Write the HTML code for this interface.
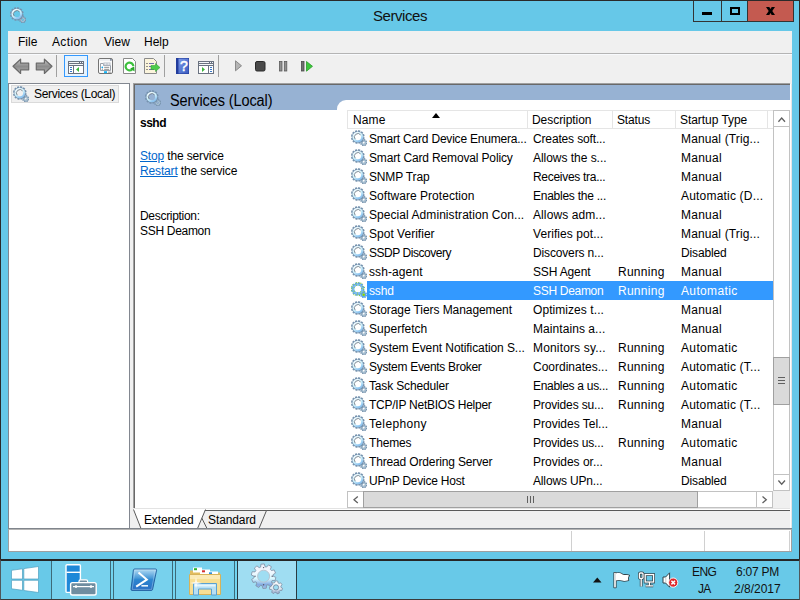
<!DOCTYPE html>
<html><head><meta charset="utf-8">
<style>
*{margin:0;padding:0;box-sizing:border-box}
html,body{width:800px;height:600px;overflow:hidden;background:#66c8e8;font-family:"Liberation Sans",sans-serif;font-size:12px;color:#000}
.a{position:absolute}
svg{position:absolute;overflow:visible}
#frame{left:0;top:0;width:800px;height:560px;background:#66c8e8;border:1px solid #2a2a2a}
#title{left:0;top:7px;width:800px;text-align:center;font-size:15px;color:#111;letter-spacing:-0.45px}
.tb{top:1px;height:21px;border:1px solid #333;border-top:none}
#client{left:8px;top:31px;width:784px;height:521px;background:#f0f0f0}
#menubar span{position:absolute;top:4px}
.tsep{top:55px;width:1px;height:22px;background:#a0a0a0}
#left{left:8px;top:83px;width:122px;height:446px;background:#fff;border:1px solid #828790}
#right{left:133px;top:83px;width:657px;height:425px;background:#f0f0f0;border-top:1px solid #a0a0a0;border-left:1px solid #a0a0a0}
#right2{left:134px;top:84px;width:656px;height:424px;border-top:1px solid #696969;border-left:1px solid #696969}
#hdr{left:135px;top:85px;width:655px;height:25px;background:#97b2d3}
#white{left:135px;top:110px;width:655px;height:398px;background:#fff}
#tabw{left:337px;top:100px;width:453px;height:12px;background:#fff;border-top-left-radius:9px}
.row{position:absolute;left:347px;width:426px;height:19px;letter-spacing:-0.15px}
.row span{position:absolute;top:3px;white-space:nowrap}
.c1{left:22px}.c2{left:186px}.c3{left:271px}.c4{left:334px}
.sel::before{content:"";position:absolute;left:20px;top:0;width:406px;height:19px;background:#3399ff}
.sel span{color:#fff}
.gear{left:4px;top:1px;width:16px;height:16px}
#lh{left:347px;top:110px;width:426px;height:19px;background:#fff;border-top:1px solid #e5e5e5;border-bottom:1px solid #e5e5e5;border-left:1px solid #e5e5e5}
.hs{position:absolute;top:0;width:1px;height:17px;background:#e5e5e5}
#lh span{position:absolute;top:2px;letter-spacing:-0.15px}
.sb{background:#fff;border:1px solid #c2c2c2}
.lk{color:#0066cc;text-decoration:underline}
.tk{top:560px;height:39px}
.tray{color:#111;font-size:12px;position:absolute;white-space:nowrap}
</style></head><body>
<svg width="0" height="0" style="position:absolute">
<defs><linearGradient id="gr" x1="0" y1="0" x2="0.6" y2="1"><stop offset="0" stop-color="#f4fcff"/><stop offset="0.6" stop-color="#cdf0fb"/><stop offset="1" stop-color="#8ec4f0"/></linearGradient>
<radialGradient id="gg" cx="0.5" cy="0.5" r="0.5"><stop offset="0.4" stop-color="#f2fbff"/><stop offset="0.62" stop-color="#c6eaf8"/><stop offset="0.8" stop-color="#98b8d2"/><stop offset="1" stop-color="#84a4c0"/></radialGradient>
<linearGradient id="tgg" x1="0" y1="0" x2="0" y2="1"><stop offset="0" stop-color="#e8ecf8"/><stop offset="0.3" stop-color="#f4f8ff"/><stop offset="0.6" stop-color="#d8f8ff"/><stop offset="0.85" stop-color="#80a8e0"/><stop offset="1" stop-color="#a8c0e8"/></linearGradient><linearGradient id="tgs" x1="0" y1="0" x2="0" y2="1"><stop offset="0" stop-color="#ffffff"/><stop offset="0.6" stop-color="#e0e8f0"/><stop offset="1" stop-color="#8aa0c8"/></linearGradient>
<linearGradient id="arr" x1="0" y1="0" x2="0" y2="1"><stop offset="0" stop-color="#c8c8c8"/><stop offset="0.5" stop-color="#8c8c8c"/><stop offset="1" stop-color="#b0b0b0"/></linearGradient>
<linearGradient id="ps" x1="0" y1="0" x2="1" y2="1"><stop offset="0" stop-color="#5aa8e0"/><stop offset="0.6" stop-color="#2a70b8"/><stop offset="1" stop-color="#1e5aa0"/></linearGradient>
<symbol id="g" viewBox="0 0 16 16"><path d="M15.40 12.70 L16.37 13.13 L15.96 14.46 L14.91 14.25 L14.61 14.61 L14.99 15.61 L13.76 16.24 L13.16 15.36 L12.70 15.40 L12.27 16.37 L10.94 15.96 L11.15 14.91 L10.79 14.61 L9.79 14.99 L9.16 13.76 L10.04 13.16 L10.00 12.70 L9.03 12.27 L9.44 10.94 L10.49 11.15 L10.79 10.79 L10.41 9.79 L11.64 9.16 L12.24 10.04 L12.70 10.00 L13.13 9.03 L14.46 9.44 L14.25 10.49 L14.61 10.79 L15.61 10.41 L16.24 11.64 L15.36 12.24ZM13.80 12.70 A1.10 1.10 0 1 0 11.60 12.70 A1.10 1.10 0 1 0 13.80 12.70Z" fill="#7a96b0" fill-rule="evenodd"/><circle cx="12.7" cy="12.7" r="1.8" fill="none" stroke="#b8d0e0" stroke-width="0.9"/><path d="M12.10 7.00 L13.68 7.54 L13.17 9.64 L11.52 9.41 L11.39 9.65 L12.49 10.91 L11.00 12.47 L9.69 11.44 L9.45 11.59 L9.77 13.23 L7.70 13.84 L7.08 12.29 L6.80 12.30 L6.26 13.88 L4.16 13.37 L4.39 11.72 L4.15 11.59 L2.89 12.69 L1.33 11.20 L2.36 9.89 L2.21 9.65 L0.57 9.97 L-0.04 7.90 L1.51 7.28 L1.50 7.00 L-0.08 6.46 L0.43 4.36 L2.08 4.59 L2.21 4.35 L1.11 3.09 L2.60 1.53 L3.91 2.56 L4.15 2.41 L3.83 0.77 L5.90 0.16 L6.52 1.71 L6.80 1.70 L7.34 0.12 L9.44 0.63 L9.21 2.28 L9.45 2.41 L10.71 1.31 L12.27 2.80 L11.24 4.11 L11.39 4.35 L13.03 4.03 L13.64 6.10 L12.09 6.72ZM10.80 7.00 A4.00 4.00 0 1 0 2.80 7.00 A4.00 4.00 0 1 0 10.80 7.00Z" fill="#7592ae" fill-rule="evenodd"/><circle cx="6.8" cy="7" r="4.3" fill="none" stroke="url(#gr)" stroke-width="2.1"/><path d="M4.2 9.2A3.3 3.3 0 0 1 9.6 4.9" fill="none" stroke="#5d6570" stroke-width="0.8" opacity="0.9"/></symbol>
<symbol id="gs" viewBox="0 0 16 16"><path d="M15.40 12.70 L16.37 13.13 L15.96 14.46 L14.91 14.25 L14.61 14.61 L14.99 15.61 L13.76 16.24 L13.16 15.36 L12.70 15.40 L12.27 16.37 L10.94 15.96 L11.15 14.91 L10.79 14.61 L9.79 14.99 L9.16 13.76 L10.04 13.16 L10.00 12.70 L9.03 12.27 L9.44 10.94 L10.49 11.15 L10.79 10.79 L10.41 9.79 L11.64 9.16 L12.24 10.04 L12.70 10.00 L13.13 9.03 L14.46 9.44 L14.25 10.49 L14.61 10.79 L15.61 10.41 L16.24 11.64 L15.36 12.24ZM13.80 12.70 A1.10 1.10 0 1 0 11.60 12.70 A1.10 1.10 0 1 0 13.80 12.70Z" fill="#5ea6ea" fill-rule="evenodd"/><path d="M12.10 7.00 L13.68 7.54 L13.17 9.64 L11.52 9.41 L11.39 9.65 L12.49 10.91 L11.00 12.47 L9.69 11.44 L9.45 11.59 L9.77 13.23 L7.70 13.84 L7.08 12.29 L6.80 12.30 L6.26 13.88 L4.16 13.37 L4.39 11.72 L4.15 11.59 L2.89 12.69 L1.33 11.20 L2.36 9.89 L2.21 9.65 L0.57 9.97 L-0.04 7.90 L1.51 7.28 L1.50 7.00 L-0.08 6.46 L0.43 4.36 L2.08 4.59 L2.21 4.35 L1.11 3.09 L2.60 1.53 L3.91 2.56 L4.15 2.41 L3.83 0.77 L5.90 0.16 L6.52 1.71 L6.80 1.70 L7.34 0.12 L9.44 0.63 L9.21 2.28 L9.45 2.41 L10.71 1.31 L12.27 2.80 L11.24 4.11 L11.39 4.35 L13.03 4.03 L13.64 6.10 L12.09 6.72ZM10.80 7.00 A4.00 4.00 0 1 0 2.80 7.00 A4.00 4.00 0 1 0 10.80 7.00Z" fill="#5ea6ea" fill-rule="evenodd"/><circle cx="6.8" cy="7" r="4.3" fill="none" stroke="#7dbcf4" stroke-width="2.1"/><circle cx="6.8" cy="7" r="3.1" fill="#fff"/><path d="M12.10 7.00 L13.68 7.54 L13.17 9.64 L11.52 9.41 L11.39 9.65 L12.49 10.91 L11.00 12.47 L9.69 11.44 L9.45 11.59 L9.77 13.23 L7.70 13.84 L7.08 12.29 L6.80 12.30 L6.26 13.88 L4.16 13.37 L4.39 11.72 L4.15 11.59 L2.89 12.69 L1.33 11.20 L2.36 9.89 L2.21 9.65 L0.57 9.97 L-0.04 7.90 L1.51 7.28 L1.50 7.00 L-0.08 6.46 L0.43 4.36 L2.08 4.59 L2.21 4.35 L1.11 3.09 L2.60 1.53 L3.91 2.56 L4.15 2.41 L3.83 0.77 L5.90 0.16 L6.52 1.71 L6.80 1.70 L7.34 0.12 L9.44 0.63 L9.21 2.28 L9.45 2.41 L10.71 1.31 L12.27 2.80 L11.24 4.11 L11.39 4.35 L13.03 4.03 L13.64 6.10 L12.09 6.72ZM10.80 7.00 A4.00 4.00 0 1 0 2.80 7.00 A4.00 4.00 0 1 0 10.80 7.00Z" fill="none" stroke="#88d000" stroke-width="1" stroke-dasharray="0.9 2.6"/><circle cx="12.7" cy="12.7" r="1.3" fill="#88d000"/></symbol>
</defs></svg>
<div id="frame" class="a"></div>
<svg style="left:10px;top:7px" width="16" height="16" viewBox="0 0 16 16"><use href="#g"/></svg>
<div id="title" class="a">Services</div>
<div class="a tb" style="left:693px;width:29px;background:#66c8e8"></div>
<div class="a tb" style="left:721px;width:27px;background:#66c8e8"></div>
<div class="a tb" style="left:747px;width:47px;background:#c45a50"></div>
<div class="a" style="left:702px;top:12px;width:10px;height:3px;background:#000"></div>
<div class="a" style="left:730px;top:7px;width:10px;height:8px;border:2px solid #000"></div>
<svg style="left:766px;top:7px" width="9" height="8"><path d="M0 0H3.3L4.5 2L5.7 0H9L6.3 4L9 8H5.7L4.5 6L3.3 8H0L2.7 4Z" fill="#000"/></svg>
<div id="client" class="a"></div>
<div id="menubar" class="a" style="left:0;top:31px">
<span style="left:18px">File</span><span style="left:52px;letter-spacing:0.35px">Action</span><span style="left:104px">View</span><span style="left:144px">Help</span>
</div>
<div class="a" style="left:8px;top:53px;width:784px;height:1px;background:#b4b4b4"></div><div class="a" style="left:8px;top:54px;width:784px;height:1px;background:#f8fafd"></div>
<!-- toolbar -->
<svg style="left:12px;top:58px" width="18" height="17"><path d="M1 8.3L8.6 1.2V5.2H16.7V11.8H8.6V15.5Z" fill="url(#arr)" stroke="#6a6a6a" stroke-width="1.2" stroke-linejoin="round"/></svg>
<svg style="left:35px;top:58px" width="18" height="17"><path d="M17 8.3L9.4 1.2V5.2H1.3V11.8H9.4V15.5Z" fill="url(#arr)" stroke="#6a6a6a" stroke-width="1.2" stroke-linejoin="round"/></svg>
<div class="a tsep" style="left:56px"></div>
<div class="a" style="left:64px;top:55px;width:24px;height:22px;background:#e5f3ff;border:1px solid #3399ff"></div>
<svg style="left:68px;top:61px" width="16" height="13"><rect x="0" y="0" width="16" height="13" fill="#6a7280"/><rect x="1" y="1" width="10" height="1" fill="#f4f6f8"/><rect x="12" y="1" width="1" height="1" fill="#f4f6f8"/><rect x="14" y="1" width="1" height="1" fill="#f4f6f8"/><rect x="1" y="3" width="14" height="1" fill="#f4f6f8"/><rect x="1" y="5" width="4" height="7" fill="#fff"/><rect x="6" y="5" width="9" height="7" fill="#fff"/><rect x="2" y="6" width="2" height="1" fill="#3a78c8"/><rect x="2" y="8" width="2" height="1" fill="#3a78c8"/><rect x="2" y="10" width="2" height="1" fill="#3a78c8"/><path d="M8 8.5L11 6V11Z" fill="#3cb53c"/></svg>
<svg style="left:98px;top:58px" width="15" height="16"><rect x="0.5" y="0.5" width="14" height="15" rx="1.5" fill="#fafafa" stroke="#747474"/><rect x="1.5" y="1.5" width="11" height="1" fill="#dfe4ea"/><rect x="12.2" y="1.2" width="1.4" height="1.4" fill="#4a5a7a"/><path d="M2.5 5.5H5.5V7.5H12.5V12.5H2.5Z" fill="#fff" stroke="#9aa0aa"/><rect x="5.5" y="4.5" width="7" height="3" fill="#b8bec8"/><rect x="6.5" y="5.5" width="2" height="1" fill="#fff"/><rect x="9.5" y="5.5" width="2" height="1" fill="#fff"/><circle cx="4.3" cy="9.3" r="0.9" fill="#10a8f0"/><circle cx="4.3" cy="11.2" r="0.6" fill="#888"/><rect x="6.2" y="8.8" width="5" height="1" fill="#8a8a8a"/><rect x="6.2" y="10.8" width="5" height="1" fill="#8a8a8a"/><rect x="6" y="13.2" width="3" height="2" fill="#18b4f4"/><rect x="10" y="13.5" width="3" height="1.5" fill="#bbb"/></svg>
<svg style="left:123px;top:58px" width="13" height="16"><path d="M0.5 0.5H9.5L12.5 3.5V15.5H0.5Z" fill="#fff" stroke="#8a8a8a"/><path d="M9.3 11.2A3.9 3.9 0 1 1 10.4 8.2" fill="none" stroke="#3cc03c" stroke-width="2.2"/><path d="M7.2 10.6L11.6 13.4L11.2 8.6Z" fill="#2aa82a"/></svg>
<svg style="left:144px;top:58px" width="17" height="16"><path d="M0.5 0.5H9.5L12.5 3.5V15.5H0.5Z" fill="#fbf4dc" stroke="#8a8a8a"/><rect x="2.5" y="5" width="1" height="1" fill="#333"/><rect x="5" y="5" width="5" height="1" fill="#7070b0"/><rect x="2.5" y="8" width="1" height="1" fill="#333"/><rect x="5" y="8" width="5" height="1" fill="#7070b0"/><rect x="2.5" y="11" width="1" height="1" fill="#333"/><rect x="5" y="11" width="5" height="1" fill="#7070b0"/><path d="M7 7.5H11.5V5.5L16 9.5L11.5 13.5V11.5H7Z" fill="#4ccc4c" stroke="#2a9a2a" stroke-width="0.5"/></svg>
<div class="a tsep" style="left:164px"></div>
<svg style="left:176px;top:58px" width="14" height="17"><defs><linearGradient id="hb" x1="0" y1="0" x2="1" y2="1"><stop offset="0" stop-color="#7a98e8"/><stop offset="1" stop-color="#3a5cc0"/></linearGradient></defs><rect x="0" y="0" width="13" height="16" fill="#223c9c"/><rect x="2.5" y="0.6" width="10" height="14.8" fill="url(#hb)"/><text x="7.8" y="13.2" font-family="Liberation Sans" font-size="14" fill="#fff" stroke="#fff" stroke-width="0.5" text-anchor="middle">?</text></svg>
<svg style="left:198px;top:61px" width="16" height="13"><rect x="0" y="0" width="16" height="13" fill="#6a7280"/><rect x="1" y="1" width="10" height="1" fill="#f4f6f8"/><rect x="12" y="1" width="1" height="1" fill="#f4f6f8"/><rect x="14" y="1" width="1" height="1" fill="#f4f6f8"/><rect x="1" y="3" width="14" height="1" fill="#f4f6f8"/><rect x="1" y="5" width="9" height="7" fill="#fff"/><rect x="11" y="5" width="4" height="7" fill="#fff"/><rect x="12" y="6" width="2" height="1" fill="#3a78c8"/><rect x="12" y="8" width="2" height="1" fill="#3a78c8"/><rect x="12" y="10" width="2" height="1" fill="#3a78c8"/><path d="M4 6L7 8.5L4 11Z" fill="#3cb53c"/></svg>
<div class="a tsep" style="left:218px"></div>
<svg style="left:235px;top:60px" width="8" height="12"><path d="M0.5 0.8L6.5 5.8L0.5 10.8Z" fill="#b4b4b4" stroke="#8a8a8a"/></svg>
<svg style="left:255px;top:61px" width="11" height="11"><rect x="0.5" y="0.5" width="9.5" height="9.5" rx="1.5" fill="#4a4a4a" stroke="#2a2a2a"/></svg>
<svg style="left:279px;top:61px" width="9" height="11"><rect x="0.5" y="0.5" width="2.5" height="9.5" fill="#909090" stroke="#5a5a5a" stroke-width="0.8"/><rect x="5.3" y="0.5" width="2.5" height="9.5" fill="#909090" stroke="#5a5a5a" stroke-width="0.8"/></svg>
<svg style="left:301px;top:61px" width="13" height="11"><rect x="0.5" y="0.5" width="2.5" height="9.5" fill="#707070" stroke="#4a4a4a" stroke-width="0.8"/><path d="M5.5 0.5L11.5 5.3L5.5 10.2Z" fill="#3cc83c" stroke="#2a9a2a" stroke-width="0.8"/></svg>

<div id="left" class="a"></div>
<div class="a" style="left:11px;top:85px;width:108px;height:18px;background:#f0f0f0;border:1px solid #dadada"></div>
<svg style="left:13px;top:86px" width="16" height="16" viewBox="0 0 16 16"><use href="#g"/></svg>
<span class="a" style="left:34px;top:87px;letter-spacing:-0.3px">Services (Local)</span>

<div id="right" class="a"></div><div id="right2" class="a"></div>
<div id="hdr" class="a"></div>
<div class="a" style="left:790px;top:84px;width:1px;height:444px;background:#fff"></div>
<div class="a" style="left:791px;top:84px;width:1px;height:444px;background:#e6e6e6"></div>
<div id="white" class="a"></div>
<div id="tabw" class="a"></div>
<svg style="left:145px;top:90px" width="16" height="16" viewBox="0 0 16 16"><use href="#g"/></svg>
<span class="a" style="left:170px;top:92px;font-size:16px;letter-spacing:-0.1px;transform:scaleX(0.905);transform-origin:0 0;white-space:nowrap">Services (Local)</span>
<span class="a" style="left:140px;top:116px;font-weight:bold;letter-spacing:-0.5px">sshd</span>
<span class="a" style="left:140px;top:149px;letter-spacing:-0.15px"><span class="lk">Stop</span> the service</span>
<span class="a" style="left:140px;top:164px;letter-spacing:-0.15px"><span class="lk">Restart</span> the service</span>
<span class="a" style="left:140px;top:209px;letter-spacing:-0.3px">Description:</span>
<span class="a" style="left:140px;top:224px;letter-spacing:-0.3px">SSH Deamon</span>

<div id="lh" class="a">
<span style="left:5px;letter-spacing:0.1px">Name</span>
<div class="hs" style="left:179px"></div>
<span style="left:184px;letter-spacing:-0.05px">Description</span>
<div class="hs" style="left:264px"></div>
<span style="left:269px">Status</span>
<div class="hs" style="left:327px"></div>
<span style="left:332px;letter-spacing:-0.05px">Startup Type</span>
<div class="hs" style="left:419px"></div>
</div>
<svg style="left:432px;top:113px" width="9" height="5"><path d="M0 5L4 0L8 5Z" fill="#000"/></svg>
<div class="row" style="top:129px"><svg class="gear" viewBox="0 0 16 16"><use href="#g"/></svg><span class="c1" style="letter-spacing:-0.206px">Smart Card Device Enumera...</span><span class="c2" style="letter-spacing:-0.150px">Creates soft...</span><span class="c4" style="letter-spacing:0.136px">Manual (Trig...</span></div>
<div class="row" style="top:148px"><svg class="gear" viewBox="0 0 16 16"><use href="#g"/></svg><span class="c1" style="letter-spacing:-0.150px">Smart Card Removal Policy</span><span class="c2" style="letter-spacing:-0.036px">Allows the s...</span><span class="c4" style="letter-spacing:0.250px">Manual</span></div>
<div class="row" style="top:167px"><svg class="gear" viewBox="0 0 16 16"><use href="#g"/></svg><span class="c1" style="letter-spacing:-0.150px">SNMP Trap</span><span class="c2" style="letter-spacing:-0.293px">Receives tra...</span><span class="c4" style="letter-spacing:0.250px">Manual</span></div>
<div class="row" style="top:186px"><svg class="gear" viewBox="0 0 16 16"><use href="#g"/></svg><span class="c1" style="letter-spacing:0.039px">Software Protection</span><span class="c2" style="letter-spacing:-0.250px">Enables the ...</span><span class="c4" style="letter-spacing:0.193px">Automatic (D...</span></div>
<div class="row" style="top:205px"><svg class="gear" viewBox="0 0 16 16"><use href="#g"/></svg><span class="c1" style="letter-spacing:0.064px">Special Administration Con...</span><span class="c2" style="letter-spacing:0.100px">Allows adm...</span><span class="c4" style="letter-spacing:0.250px">Manual</span></div>
<div class="row" style="top:224px"><svg class="gear" viewBox="0 0 16 16"><use href="#g"/></svg><span class="c1" style="letter-spacing:0.017px">Spot Verifier</span><span class="c2" style="letter-spacing:0.064px">Verifies pot...</span><span class="c4" style="letter-spacing:0.136px">Manual (Trig...</span></div>
<div class="row" style="top:243px"><svg class="gear" viewBox="0 0 16 16"><use href="#g"/></svg><span class="c1" style="letter-spacing:-0.458px">SSDP Discovery</span><span class="c2" style="letter-spacing:-0.150px">Discovers n...</span><span class="c4" style="letter-spacing:-0.150px">Disabled</span></div>
<div class="row" style="top:262px"><svg class="gear" viewBox="0 0 16 16"><use href="#g"/></svg><span class="c1" style="letter-spacing:0.100px">ssh-agent</span><span class="c2" style="letter-spacing:-0.150px">SSH Agent</span><span class="c3" style="letter-spacing:0.267px">Running</span><span class="c4" style="letter-spacing:0.250px">Manual</span></div>
<div class="row sel" style="top:281px"><svg class="gear" viewBox="0 0 16 16"><use href="#gs"/></svg><span class="c1" style="letter-spacing:-0.150px">sshd</span><span class="c2" style="letter-spacing:-0.306px">SSH Deamon</span><span class="c3" style="letter-spacing:0.267px">Running</span><span class="c4" style="letter-spacing:0.350px">Automatic</span></div>
<div class="row" style="top:300px"><svg class="gear" viewBox="0 0 16 16"><use href="#g"/></svg><span class="c1" style="letter-spacing:-0.074px">Storage Tiers Management</span><span class="c2" style="letter-spacing:0.065px">Optimizes t...</span><span class="c4" style="letter-spacing:0.250px">Manual</span></div>
<div class="row" style="top:319px"><svg class="gear" viewBox="0 0 16 16"><use href="#g"/></svg><span class="c1" style="letter-spacing:0.028px">Superfetch</span><span class="c2" style="letter-spacing:0.065px">Maintains a...</span><span class="c4" style="letter-spacing:0.250px">Manual</span></div>
<div class="row" style="top:338px"><svg class="gear" viewBox="0 0 16 16"><use href="#g"/></svg><span class="c1" style="letter-spacing:-0.081px">System Event Notification S...</span><span class="c2" style="letter-spacing:0.158px">Monitors sy...</span><span class="c3" style="letter-spacing:0.267px">Running</span><span class="c4" style="letter-spacing:0.350px">Automatic</span></div>
<div class="row" style="top:357px"><svg class="gear" viewBox="0 0 16 16"><use href="#g"/></svg><span class="c1" style="letter-spacing:-0.308px">System Events Broker</span><span class="c2" style="letter-spacing:0.004px">Coordinates...</span><span class="c3" style="letter-spacing:0.267px">Running</span><span class="c4" style="letter-spacing:0.193px">Automatic (T...</span></div>
<div class="row" style="top:376px"><svg class="gear" viewBox="0 0 16 16"><use href="#g"/></svg><span class="c1" style="letter-spacing:-0.150px">Task Scheduler</span><span class="c2" style="letter-spacing:-0.293px">Enables a us...</span><span class="c3" style="letter-spacing:0.267px">Running</span><span class="c4" style="letter-spacing:0.350px">Automatic</span></div>
<div class="row" style="top:395px"><svg class="gear" viewBox="0 0 16 16"><use href="#g"/></svg><span class="c1" style="letter-spacing:-0.250px">TCP/IP NetBIOS Helper</span><span class="c2" style="letter-spacing:-0.150px">Provides su...</span><span class="c3" style="letter-spacing:0.267px">Running</span><span class="c4" style="letter-spacing:0.193px">Automatic (T...</span></div>
<div class="row" style="top:414px"><svg class="gear" viewBox="0 0 16 16"><use href="#g"/></svg><span class="c1" style="letter-spacing:0.350px">Telephony</span><span class="c2" style="letter-spacing:-0.007px">Provides Tel...</span><span class="c4" style="letter-spacing:0.250px">Manual</span></div>
<div class="row" style="top:433px"><svg class="gear" viewBox="0 0 16 16"><use href="#g"/></svg><span class="c1" style="letter-spacing:-0.150px">Themes</span><span class="c2" style="letter-spacing:-0.150px">Provides us...</span><span class="c3" style="letter-spacing:0.267px">Running</span><span class="c4" style="letter-spacing:0.350px">Automatic</span></div>
<div class="row" style="top:452px"><svg class="gear" viewBox="0 0 16 16"><use href="#g"/></svg><span class="c1" style="letter-spacing:-0.150px">Thread Ordering Server</span><span class="c2" style="letter-spacing:-0.012px">Provides or...</span><span class="c4" style="letter-spacing:0.250px">Manual</span></div>
<div class="row" style="top:471px"><svg class="gear" viewBox="0 0 16 16"><use href="#g"/></svg><span class="c1" style="letter-spacing:-0.217px">UPnP Device Host</span><span class="c2" style="letter-spacing:-0.150px">Allows UPn...</span><span class="c4" style="letter-spacing:-0.150px">Disabled</span></div>

<!-- vscroll -->
<div class="a sb" style="left:773px;top:110px;width:17px;height:381px"></div>
<div class="a sb" style="left:773px;top:110px;width:17px;height:17px"></div>
<svg style="left:778px;top:117px" width="8" height="6"><path d="M0.4 4.8L3.7 1L7 4.8" fill="none" stroke="#606060" stroke-width="1.3"/></svg>
<div class="a sb" style="left:773px;top:474px;width:17px;height:17px"></div>
<svg style="left:778px;top:480px" width="8" height="6"><path d="M0.4 0.5L3.7 4.3L7 0.5" fill="none" stroke="#606060" stroke-width="1.3"/></svg>
<div class="a" style="left:773px;top:357px;width:17px;height:48px;background:#dadada;border:1px solid #a0a0a0"></div>
<div class="a" style="left:778px;top:377px;width:7px;height:1px;background:#606060;box-shadow:0 3px 0 #606060,0 6px 0 #606060"></div>
<!-- hscroll -->
<div class="a sb" style="left:347px;top:491px;width:426px;height:17px"></div>
<div class="a sb" style="left:347px;top:491px;width:17px;height:17px"></div>
<svg style="left:353px;top:496px" width="6" height="8"><path d="M4.8 0.4L1 3.7L4.8 7" fill="none" stroke="#606060" stroke-width="1.3"/></svg>
<div class="a sb" style="left:756px;top:491px;width:17px;height:17px"></div>
<svg style="left:762px;top:496px" width="6" height="8"><path d="M0.5 0.4L4.3 3.7L0.5 7" fill="none" stroke="#606060" stroke-width="1.3"/></svg>
<div class="a" style="left:363px;top:491px;width:335px;height:17px;background:#dadada;border:1px solid #a0a0a0"></div>
<div class="a" style="left:527px;top:496px;width:1px;height:7px;background:#606060;box-shadow:3px 0 0 #606060,6px 0 0 #606060"></div>
<div class="a" style="left:773px;top:491px;width:17px;height:17px;background:#f0f0f0"></div>
<!-- tabstrip -->
<div class="a" style="left:134px;top:508px;width:656px;height:1px;background:#e3e3e3"></div>
<div class="a" style="left:134px;top:509px;width:656px;height:1px;background:#fff"></div>
<div class="a" style="left:130px;top:510px;width:660px;height:18px;background:#f0f0f0"></div>
<div class="a" style="left:200px;top:510px;width:590px;height:1px;background:#5a5a5a"></div>
<svg style="left:133px;top:509px" width="140" height="20"><path d="M65 1.5H133.5L126 19.5H74Z" fill="#f0f0f0" stroke="#5a5a5a"/><path d="M0 0H72.5L64.5 19.5H8Z" fill="#fff"/><path d="M0.5 0.5L8 19.5M72.5 0.5L64.5 19.5" fill="none" stroke="#5a5a5a"/></svg>
<span class="a" style="left:144px;top:513px;letter-spacing:-0.15px">Extended</span>
<span class="a" style="left:208px;top:513px;letter-spacing:-0.1px">Standard</span>
<div class="a" style="left:8px;top:528px;width:784px;height:1px;background:#80858c"></div>
<!-- statusbar -->
<div class="a" style="left:8px;top:529px;width:784px;height:23px;background:#fff;border-top:1px solid #b4b4b4;border-bottom:1px solid #a0a0a0;border-left:1px solid #a0a0a0;border-right:1px solid #a0a0a0"></div>
<div class="a" style="left:571px;top:531px;width:1px;height:20px;background:#d0d0d0"></div>
<div class="a" style="left:704px;top:531px;width:1px;height:20px;background:#d0d0d0"></div>
<div class="a" style="left:789px;top:531px;width:1px;height:20px;background:#d0d0d0"></div>
<!-- taskbar -->
<div class="a" style="left:0;top:559px;width:800px;height:41px;background:#68c9e8;border-top:2px solid #262626;border-bottom:1px solid #3a3a3a;border-left:1px solid #50585c;border-right:1px solid #50585c"></div>
<div class="a tk" style="left:1px;top:561px;height:38px;width:50px;background:#68c9e8"></div>
<div class="a" style="left:51px;top:561px;width:1px;height:38px;background:#3d6a78"></div>
<div class="a tk" style="left:52px;top:561px;height:38px;width:58px;background:#77d1ed"></div>
<div class="a" style="left:110px;top:561px;width:4px;height:38px;background:#72d4f0;border-left:1px solid #3d6a78;border-right:1px solid #3d6a78"></div>
<div class="a tk" style="left:114px;top:561px;height:38px;width:58px;background:#77d1ed"></div>
<div class="a" style="left:172px;top:561px;width:4px;height:38px;background:#72d4f0;border-left:1px solid #3d6a78;border-right:1px solid #3d6a78"></div>
<div class="a tk" style="left:176px;top:561px;height:38px;width:58px;background:#77d1ed"></div>
<div class="a" style="left:234px;top:561px;width:4px;height:38px;background:#72d4f0;border-left:1px solid #3d6a78;border-right:1px solid #2a3a40"></div>
<div class="a tk" style="left:238px;top:561px;height:38px;width:58px;background:#9fddf2"></div>
<div class="a" style="left:296px;top:561px;width:1px;height:38px;background:#2a3a40"></div>
<svg style="left:11px;top:566px" width="28" height="27"><path d="M0.5 4.3L11.5 2.8V13H0.5Z M12.8 2.6L27.5 0.5V13H12.8Z M0.5 14.3H11.5V24.3L0.5 22.8Z M12.8 14.3H27.5V26.5L12.8 24.5Z" fill="#fff" stroke="#4f9fbf" stroke-width="0.7"/></svg>
<svg style="left:65px;top:564px" width="33" height="32"><rect x="1" y="0.8" width="14.4" height="27.6" rx="1" fill="#1e88d8" stroke="#fff" stroke-width="1.4"/><rect x="1.5" y="7.6" width="13.5" height="1.4" fill="#fff"/><rect x="14" y="15.8" width="8.6" height="4" rx="1.5" fill="#6f8da0" stroke="#fff" stroke-width="1.2"/><rect x="5.6" y="18.6" width="25.6" height="12.4" rx="1.8" fill="#6f8da0" stroke="#fff" stroke-width="1.4"/><rect x="8" y="22" width="21" height="1.2" fill="#fff"/><circle cx="11" cy="22.6" r="1.3" fill="#fff"/><circle cx="26" cy="22.6" r="1.3" fill="#fff"/></svg>
<svg style="left:130px;top:568px" width="28" height="24"><defs><linearGradient id="psg" x1="0" y1="0" x2="0" y2="1"><stop offset="0" stop-color="#b4dcf4"/><stop offset="0.42" stop-color="#4a9ad8"/><stop offset="0.5" stop-color="#2d86d0"/><stop offset="1" stop-color="#2a6ec4"/></linearGradient></defs><path d="M4.6 1H25.6C26.3 1 26.7 1.5 26.6 2.2L22.6 21.4C22.4 22 22 22.4 21.4 22.4H2C1.3 22.4 0.9 21.9 1 21.2L3.4 2C3.6 1.4 4 1 4.6 1Z" fill="url(#psg)" stroke="#1f5c9c" stroke-width="0.9"/><path d="M5 2H25.2L21.6 21.4H2.2Z" fill="none" stroke="#d0ecfa" stroke-width="0.5" opacity="0.7"/><path d="M8.5 4.6L16.8 11.6L6.2 18.6" fill="none" stroke="#fff" stroke-width="2"/><rect x="11.4" y="17" width="6.6" height="1.6" fill="#e8f4fc"/></svg>
<svg style="left:189px;top:567px" width="33" height="29"><path d="M1 3.5H11L13 5.5H31V27H1Z" fill="#e2bd5e"/><rect x="4" y="0.5" width="9" height="5" fill="#fff"/><rect x="5" y="1.2" width="3" height="2" fill="#2bb52b"/><rect x="11" y="2.5" width="10" height="5" fill="#fff"/><rect x="13" y="3.3" width="3" height="2" fill="#d83030"/><rect x="18" y="4.5" width="11" height="5" fill="#fff"/><rect x="20" y="5.3" width="3" height="2" fill="#3090e0"/><path d="M0.5 7.5H31.5V27.5H0.5Z" fill="#f7df94" stroke="#d6b35a" stroke-width="1"/><path d="M1 8H31V12H1Z" fill="#fbeab6"/><path d="M4.5 16.5H27.5V28H22.5V22H9.5V28H4.5Z" fill="#b8e0f4" stroke="#5aa2d2" stroke-width="1"/><path d="M5.5 17.5H26.5V19.5H5.5Z" fill="#e4f5fd"/><path d="M7 10L8 15L13 16L8 17L7 22L6 17L1 16L6 15Z" fill="#fff" opacity="0.8"/></svg>
<svg style="left:251px;top:564px" width="33" height="32"><path d="M30.00 23.40 L31.54 24.29 L30.81 26.53 L29.05 26.34 L28.12 27.31 L28.39 29.07 L26.18 29.89 L25.22 28.39 L23.89 28.27 L22.68 29.58 L20.66 28.37 L21.23 26.69 L20.50 25.57 L18.72 25.44 L18.41 23.10 L20.08 22.51 L20.50 21.23 L19.49 19.76 L21.12 18.06 L22.63 19.00 L23.89 18.53 L24.41 16.83 L26.76 17.04 L26.97 18.80 L28.12 19.49 L29.77 18.84 L31.07 20.81 L29.82 22.07Z" fill="url(#tgs)" stroke="#7d8ea3" stroke-width="0.8"/><circle cx="25" cy="23.4" r="2.6" fill="#9fddf2" stroke="#6f8298" stroke-width="0.8"/><path d="M22.20 12.20 L24.85 13.36 L24.06 16.66 L21.18 16.50 L20.37 17.84 L21.83 20.33 L19.26 22.54 L17.01 20.73 L15.57 21.33 L15.28 24.20 L11.90 24.48 L11.16 21.69 L9.63 21.33 L7.72 23.49 L4.82 21.73 L5.85 19.03 L4.83 17.84 L2.01 18.46 L0.71 15.33 L3.13 13.76 L3.00 12.20 L0.35 11.04 L1.14 7.74 L4.02 7.90 L4.83 6.56 L3.37 4.07 L5.94 1.86 L8.19 3.67 L9.63 3.07 L9.92 0.20 L13.30 -0.08 L14.04 2.71 L15.57 3.07 L17.48 0.91 L20.38 2.67 L19.35 5.37 L20.37 6.56 L23.19 5.94 L24.49 9.07 L22.07 10.64Z" fill="url(#tgg)" stroke="#7d8ea3" stroke-width="0.8"/><circle cx="12.6" cy="12.2" r="6" fill="#9fddf2" stroke="#b8c4d0" stroke-width="1"/><circle cx="12.6" cy="3.6" r="0.7" fill="#556"/><circle cx="12.6" cy="20.8" r="0.7" fill="#556"/><circle cx="4" cy="12.2" r="0.7" fill="#556"/><circle cx="21.2" cy="12.2" r="0.7" fill="#556"/></svg>
<!-- tray -->
<svg style="left:593px;top:577px" width="9" height="6"><path d="M0 5.5L4.3 0.5L8.5 5.5Z" fill="#111"/></svg>
<svg style="left:613px;top:572px" width="18" height="17"><g stroke="#33434a" stroke-width="1.6" stroke-linejoin="round"><rect x="1.2" y="0.8" width="1.6" height="14.6"/><path d="M2.8 1.6C5 0.6 7.5 1.2 9.5 2.4C11.5 3.2 13.5 2.6 16.2 3.4C15 4.6 14.6 6.6 15.4 8.2C12.8 9 11 9.4 9 8.6C7 7.8 5 7.6 2.8 8.6Z"/></g><g fill="#fff"><rect x="1.2" y="0.8" width="1.6" height="14.6"/><path d="M2.8 1.6C5 0.6 7.5 1.2 9.5 2.4C11.5 3.2 13.5 2.6 16.2 3.4C15 4.6 14.6 6.6 15.4 8.2C12.8 9 11 9.4 9 8.6C7 7.8 5 7.6 2.8 8.6Z"/></g></svg>
<svg style="left:638px;top:572px" width="17" height="16"><g fill="none" stroke="#33434a" stroke-width="2.8"><rect x="1.4" y="1" width="3.6" height="5.4" rx="1"/><path d="M3.2 6.5V14.5"/><rect x="7.2" y="2.6" width="8.4" height="7.4"/><path d="M11.4 10V13.6M7.6 13.8H15.2"/></g><g fill="none" stroke="#fff" stroke-width="1.3"><rect x="1.4" y="1" width="3.6" height="5.4" rx="1"/><path d="M3.2 6.5V14.5"/><rect x="7.2" y="2.6" width="8.4" height="7.4"/><path d="M11.4 10V13.6M7.6 13.8H15.2"/></g></svg>
<svg style="left:662px;top:572px" width="17" height="16"><path d="M1 5H3.6L7.6 0.8V15.2L3.6 11H1Z" fill="#fff" stroke="#33434a" stroke-width="1"/><path d="M3.8 5.3V10.7" stroke="#9aa" stroke-width="0.6"/><circle cx="11.2" cy="10.6" r="4.6" fill="#e0262a" stroke="#fff" stroke-width="0.9"/><path d="M9.4 8.8L13 12.4M13 8.8L9.4 12.4" stroke="#fff" stroke-width="1.5"/></svg>
<span class="tray" style="left:692px;top:565px;letter-spacing:-0.6px">ENG</span>
<span class="tray" style="left:698px;top:582px;letter-spacing:-0.8px">JA</span>
<span class="tray" style="left:736px;top:565px;letter-spacing:-0.25px">6:07 PM</span>
<span class="tray" style="left:734px;top:582px">2/8/2017</span>
</body></html>
